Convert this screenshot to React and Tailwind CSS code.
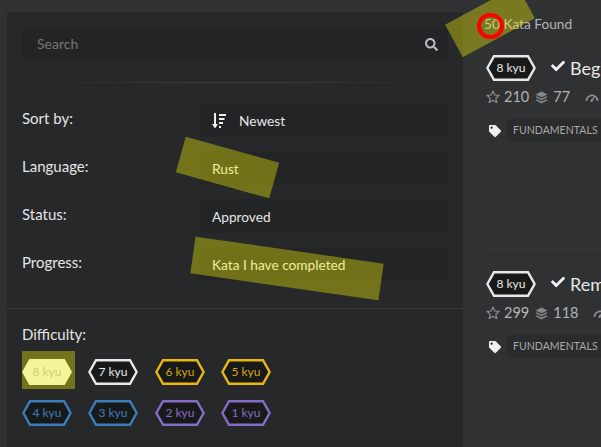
import React from "react";
import { FaSearch, FaCheck, FaTag } from "react-icons/fa";

const colors = {
  white: { stroke: "#e8e8e8", text: "text-[#e8e8e8]" },
  yellow: { stroke: "#ecb613", text: "text-[#d9a415]" },
  blue: { stroke: "#3c7ebb", text: "text-[#3c7ebb]" },
  purple: { stroke: "#866cc7", text: "text-[#866cc7]" },
};

function Hex({ label, color = "white", selected = false }) {
  const c = colors[color];
  return (
    <div className="relative flex h-[26px] w-[50px] shrink-0 items-center justify-center">
      <svg className="absolute inset-0" width="50" height="26" viewBox="0 0 50 26">
        <polygon
          points="1.4,13 8,1.2 42,1.2 48.6,13 42,24.8 8,24.8"
          fill={selected ? "#eeeeee" : "#181919"}
          stroke={selected ? "#eeeeee" : c.stroke}
          strokeWidth="2.4"
        />
      </svg>
      <span className={`relative text-[12px] leading-none ${selected ? "text-[#b4b4b4]" : c.text}`}>{label}</span>
    </div>
  );
}

function SortIcon() {
  return (
    <svg className="mr-[13px] shrink-0" width="14" height="16" viewBox="0 0 14 16" fill="#f0f0f0">
      <rect x="2" y="0" width="2" height="12" />
      <polygon points="0,11 6,11 3,15.5" />
      <rect x="7" y="1" width="7" height="2" />
      <rect x="7" y="5" width="5.5" height="2" />
      <rect x="7" y="9" width="4" height="2" />
      <rect x="7" y="13" width="2" height="2" />
    </svg>
  );
}

function StarIcon() {
  return (
    <svg className="shrink-0" width="14" height="14" viewBox="0 0 14 14" fill="none" stroke="#8c8f93" strokeWidth="1.2" strokeLinejoin="round">
      <polygon points="7,1 8.8,5 13,5.4 9.8,8.2 10.8,12.6 7,10.3 3.2,12.6 4.2,8.2 1,5.4 5.2,5" />
    </svg>
  );
}

function LayersIcon() {
  return (
    <svg className="ml-[6px] shrink-0" width="13" height="13" viewBox="0 0 13 13" fill="#85878a">
      <polygon points="6.5,0.5 12.5,3.4 6.5,6.3 0.5,3.4" />
      <polygon points="1.8,5.2 6.5,7.5 11.2,5.2 12.5,6.3 6.5,9.2 0.5,6.3" />
      <polygon points="1.8,8.2 6.5,10.5 11.2,8.2 12.5,9.3 6.5,12.4 0.5,9.3" />
    </svg>
  );
}

function GaugeIcon() {
  return (
    <svg className="ml-[15px] shrink-0" width="14" height="10" viewBox="0 0 14 10" fill="#8c8f93">
      <path d="M0.5 9 A6.5 6.5 0 0 1 13.5 9 L11.6 9 A4.6 4.6 0 0 0 9.8 5.2 L7.8 8.6 A1.2 1.2 0 1 1 6.4 7.6 L9 4.6 A4.6 4.6 0 0 0 2.4 9 Z" />
    </svg>
  );
}

function Field({ label, children }) {
  return (
    <div className="flex h-[34px] items-start">
      <div className="w-[177px] pt-[5px] text-[15px] leading-[20px] text-[#e4e4e4]">{label}</div>
      <div className="flex h-[34px] w-[249px] items-center rounded bg-[#232426] px-[13px] pt-[2px] text-[13.7px] text-[#e6e6e6]">
        {children}
      </div>
    </div>
  );
}

function Kata({ title, stars, layers, gauge, top }) {
  return (
    <div className={top}>
      <div className="flex h-[26px] items-center">
        <Hex label="8 kyu" />
        <FaCheck className="ml-[15px] mr-[5px] mb-[5px] shrink-0 text-[14px] text-[#f0f4f8]" />
        <span className="whitespace-nowrap text-[18px] leading-none text-[#e8e8e8]">{title}</span>
      </div>
      <div className="mt-[6px] flex h-[20px] items-center whitespace-nowrap text-[14.5px] text-[#b4b4b4]">
        <StarIcon />
        <span className="ml-[4px]">{stars}</span>
        <LayersIcon />
        <span className="ml-[5px]">{layers}</span>
        <GaugeIcon />
        <span className="ml-[3px] text-[#6a9fc9]">{gauge}</span>
      </div>
      <div className="mt-[12px] flex h-[23px] items-center">
        <FaTag className="ml-[3px] shrink-0 text-[12px] text-[#f0f0f0]" />
        <span className="ml-[6px] flex h-[23px] w-[120px] shrink-0 items-center rounded bg-[#2a2b2d] pl-[6px] text-[10.5px] tracking-[0.05px] text-[#a8a8a8]">
          FUNDAMENTALS
        </span>
      </div>
    </div>
  );
}

export default function App() {
  return (
    <div className="relative flex h-[447px] w-[601px] overflow-hidden bg-[#303133] pl-[7px] pt-[12px] font-['Lato','Noto_Sans',sans-serif]">
      <aside className="flex h-[435px] w-[456px] shrink-0 flex-col bg-[#27282a] pl-[15px] pr-[15px] pt-[15px]">
        <div className="flex h-[34px] items-center justify-between rounded bg-[#232426] pl-[15px] pr-[10px]">
          <span className="-translate-y-px text-[14px] text-[#767676]">Search</span>
          <FaSearch className="text-[13px] text-[#b8bcc0]" />
        </div>
        <div className="mx-[8px] mt-[21px] h-px bg-gradient-to-r from-transparent via-[#3d3e40] to-transparent" />
        <div className="mt-[20px] flex flex-col gap-[14px]">
          <Field label="Sort by:">
            <SortIcon />
            Newest
          </Field>
          <Field label="Language:">Rust</Field>
          <Field label="Status:">Approved</Field>
          <Field label="Progress:">Kata I have completed</Field>
        </div>
        <div className="-mx-[15px] mt-[27px] h-px bg-[#38393b]" />
        <div className="mt-[15px] text-[15px] leading-[20px] text-[#e4e4e4]">Difficulty:</div>
        <div className="mt-[15px] grid w-[249px] grid-cols-[66px_67px_66px_50px] gap-y-[15px]">
          <Hex label="8 kyu" selected />
          <Hex label="7 kyu" color="white" />
          <Hex label="6 kyu" color="yellow" />
          <Hex label="5 kyu" color="yellow" />
          <Hex label="4 kyu" color="blue" />
          <Hex label="3 kyu" color="blue" />
          <Hex label="2 kyu" color="purple" />
          <Hex label="1 kyu" color="purple" />
        </div>
      </aside>
      <main className="min-w-0 flex-1 pl-[23px]">
        <div className="-ml-[2px] mt-[2px] text-[13.7px] leading-[20px] text-[#b4b4b4]">50 Kata Found</div>
        <Kata title="Beginner Series #1" stars="210" layers="77" gauge="97%" top="mt-[21px]" />
        <div className="mt-[107px] h-px w-[120px] bg-[#38393b]" />
        <Kata title="Remove First and Last" stars="299" layers="118" gauge="98%" top="mt-[21px]" />
      </main>

      {/* yellow highlight overlays */}
      <div className="absolute left-[449px] top-[2.5px] h-[37px] w-[82px] rotate-[-28.4deg] bg-[#ffff00]/35" />
      <div className="absolute left-[179px] top-[148.5px] h-[37px] w-[97px] rotate-[15.6deg] bg-[#ffff00]/35" />
      <div className="absolute left-[192px] top-[250px] h-[37px] w-[190px] rotate-[8.17deg] bg-[#ffff00]/35" />
      <div className="absolute left-[22px] top-[351px] h-[38px] w-[53px] bg-[#ffff00]/35" />
      <div className="absolute left-[477px] top-[13px] h-[26px] w-[27px] rounded-full border-[4px] border-[#ff0000]" />
    </div>
  );
}
